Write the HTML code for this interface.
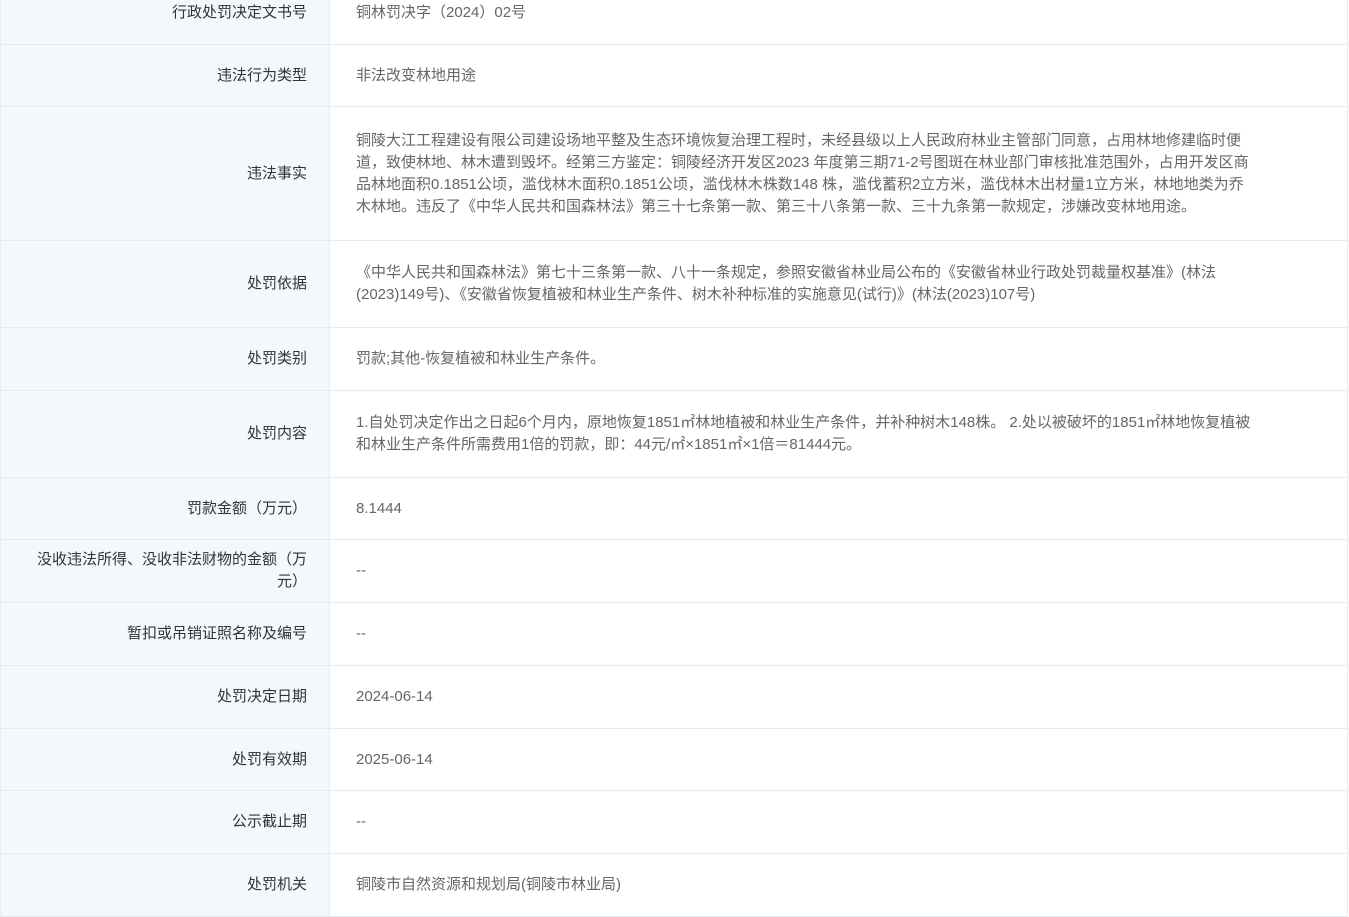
<!DOCTYPE html>
<html><head><meta charset="utf-8"><style>
body{margin:0;background:#fff;font-family:"Liberation Sans","Noto Sans CJK SC",sans-serif;font-size:15px;}
table{border-collapse:collapse;width:1348px;table-layout:fixed;margin-top:-1px}
td{border:1px solid #e6ebf0;line-height:22px;padding:0}
td.l{width:306px;background:#f2f8fc;color:#333;text-align:right;padding:0 22px 0 0;}
td.v{color:#666;padding:0 20px 0 26px;white-space:nowrap}
</style></head><body>
<table>
<tr style="height:45px"><td class="l" style="vertical-align:top;padding-top:2px">行政处罚决定文书号</td><td class="v" style="vertical-align:top;padding-top:2px">铜林罚决字（2024）02号</td></tr>
<tr style="height:62px"><td class="l">违法行为类型</td><td class="v">非法改变林地用途</td></tr>
<tr style="height:134px"><td class="l">违法事实</td><td class="v">铜陵大江工程建设有限公司建设场地平整及生态环境恢复治理工程时，未经县级以上人民政府林业主管部门同意，占用林地修建临时便<br>道，致使林地、林木遭到毁坏。经第三方鉴定：铜陵经济开发区2023 年度第三期71-2号图斑在林业部门审核批准范围外，占用开发区商<br>品林地面积0.1851公顷，滥伐林木面积0.1851公顷，滥伐林木株数148 株，滥伐蓄积2立方米，滥伐林木出材量1立方米，林地地类为乔<br>木林地。违反了《中华人民共和国森林法》第三十七条第一款、第三十八条第一款、三十九条第一款规定，涉嫌改变林地用途。</td></tr>
<tr style="height:87px"><td class="l">处罚依据</td><td class="v">《中华人民共和国森林法》第七十三条第一款、八十一条规定，参照安徽省林业局公布的《安徽省林业行政处罚裁量权基准》(林法<br>(2023)149号)、《安徽省恢复植被和林业生产条件、树木补种标准的实施意见(试行)》(林法(2023)107号)</td></tr>
<tr style="height:63px"><td class="l">处罚类别</td><td class="v">罚款;其他-恢复植被和林业生产条件。</td></tr>
<tr style="height:87px"><td class="l">处罚内容</td><td class="v">1.自处罚决定作出之日起6个月内，原地恢复1851㎡林地植被和林业生产条件，并补种树木148株。 2.处以被破坏的1851㎡林地恢复植被<br>和林业生产条件所需费用1倍的罚款，即：44元/㎡×1851㎡×1倍＝81444元。</td></tr>
<tr style="height:62px"><td class="l">罚款金额（万元）</td><td class="v">8.1444</td></tr>
<tr style="height:63px"><td class="l" style="padding-left:14px">没收违法所得、没收非法财物的金额（万元）</td><td class="v">--</td></tr>
<tr style="height:63px"><td class="l">暂扣或吊销证照名称及编号</td><td class="v">--</td></tr>
<tr style="height:63px"><td class="l">处罚决定日期</td><td class="v">2024-06-14</td></tr>
<tr style="height:62px"><td class="l">处罚有效期</td><td class="v">2025-06-14</td></tr>
<tr style="height:63px"><td class="l">公示截止期</td><td class="v">--</td></tr>
<tr style="height:63px"><td class="l">处罚机关</td><td class="v">铜陵市自然资源和规划局(铜陵市林业局)</td></tr>
</table>
</body></html>
